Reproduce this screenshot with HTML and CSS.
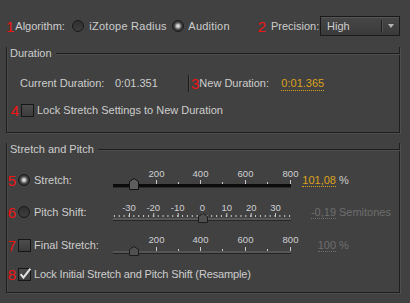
FILE: index.html
```html
<!DOCTYPE html>
<html>
<head>
<meta charset="utf-8">
<link rel="stylesheet" href="styles.css">
</head>
<body>
<div class="panel">
  <div class="top-row">
    <div class="algo">
      <span class="num n1">1</span>
      <span class="lbl algo-lbl">Algorithm:</span>
      <span class="opt opt1"><span class="radio"></span><span class="opt-text t1">iZotope Radius</span></span>
      <span class="opt opt2"><span class="radio on"></span><span class="opt-text t2">Audition</span></span>
    </div>
    <div class="prec">
      <span class="num n2">2</span>
      <span class="lbl prec-lbl">Precision:</span>
      <div class="select"><span class="select-text">High</span><span class="select-btn"><span class="arrow"></span></span></div>
    </div>
  </div>

  <section class="group dur">
    <div class="group-title"><span>Duration</span></div>
    <div class="dur-row">
      <span class="dur-cur">Current Duration:</span>
      <span class="dur-val">0:01.351</span>
      <span class="vsep"></span>
      <span class="num n3">3</span>
      <span class="dur-new">New Duration:</span>
      <span class="link">0:01.365</span>
    </div>
    <div class="chk-row">
      <span class="num n4">4</span>
      <span class="check"></span>
      <span>Lock Stretch Settings to New Duration</span>
    </div>
  </section>

  <section class="group sp">
    <div class="group-title"><span>Stretch and Pitch</span></div>
    <div class="srow r-stretch">
      <span class="num">5</span>
      <span class="radio on"></span>
      <span class="slbl">Stretch:</span>
      <svg class="slider" width="190" height="26" viewBox="0 0 190 26">
        <g class="tl">
          <text x="46.5" y="10">200</text>
          <text x="90.5" y="10">400</text>
          <text x="135.5" y="10">600</text>
          <text x="180.5" y="10">800</text>
        </g>
        <path class="tick" d="M46.5 13v4M90.5 13v4M135.5 13v4M180.5 13v4M68.5 15v2M112.5 15v2M157.5 15v2"/>
        <rect x="3" y="17" width="178" height="4" fill="#0b0b0b"/>
        <rect x="3" y="20" width="178" height="1" fill="#2a2a2a"/>
        <path class="thumb" d="M19.5 14.5 L24 11.5 L28.5 14.5 V22.5 H19.5 Z"/>
      </svg>
      <span class="val"><span class="vnum"><span class="link">101,08</span></span><span class="unit">%</span></span>
    </div>
    <div class="srow r-pitch">
      <span class="num">6</span>
      <span class="radio"></span>
      <span class="slbl">Pitch Shift:</span>
      <svg class="slider" width="190" height="26" viewBox="0 0 190 26">
        <g class="tl">
          <text x="19" y="12">-30</text>
          <text x="43.3" y="12">-20</text>
          <text x="67.7" y="12">-10</text>
          <text x="92.5" y="12">0</text>
          <text x="116.8" y="12">10</text>
          <text x="141.2" y="12">20</text>
          <text x="165.5" y="12">30</text>
        </g>
        <line class="dots" x1="3.9" y1="17" x2="181" y2="17"/>
        <path class="tick" d="M19.5 14v4M43.8 14v4M68.2 14v4M92.5 14v4M116.8 14v4M141.2 14v4M165.5 14v4"/>
        <rect x="3" y="19" width="178" height="2" fill="#585858"/>
        <rect x="3" y="21" width="178" height="1" fill="#262626"/>
        <path class="thumb dis" d="M88.5 17.5 L93 14.5 L97.5 17.5 V23.5 H88.5 Z"/>
      </svg>
      <span class="val dim"><span class="vnum"><span class="dimlink">-0,19</span></span><span class="unit">Semitones</span></span>
    </div>
    <div class="srow r-final">
      <span class="num">7</span>
      <span class="check"></span>
      <span class="slbl">Final Stretch:</span>
      <svg class="slider" width="190" height="26" viewBox="0 0 190 26">
        <g class="tl">
          <text x="46.5" y="11">200</text>
          <text x="90.5" y="11">400</text>
          <text x="135.5" y="11">600</text>
          <text x="180.5" y="11">800</text>
        </g>
        <path class="tick" d="M46.5 15v4M90.5 15v4M135.5 15v4M180.5 15v4M68.5 17v2M112.5 17v2M157.5 17v2"/>
        <rect x="3" y="19" width="178" height="2" fill="#555555"/>
        <rect x="3" y="21" width="178" height="1" fill="#242424"/>
        <path class="thumb dis" d="M19.5 17.5 L24 14.5 L28.5 17.5 V23.5 H19.5 Z"/>
      </svg>
      <span class="val dim"><span class="vnum"><span class="dimlink">100</span></span><span class="unit">%</span></span>
    </div>
    <div class="lrow">
      <span class="num">8</span>
      <span class="check on"><svg width="13" height="13" viewBox="0 0 13 13"><path d="M2.6 6.2 L5.4 9.6 L12.4 0.6" fill="none" stroke="#e2e2e2" stroke-width="2"/></svg></span>
      <span class="slbl2">Lock Initial Stretch and Pitch Shift (Resample)</span>
    </div>
  </section>
</div>
</body>
</html>
```

FILE: styles.css
```css
html, body {
  margin: 0;
  padding: 0;
}
body {
  background: #414141;
  color: #cdcdcd;
  font: 11px/13px "Liberation Sans", Arial, sans-serif;
  width: 410px;
  height: 303px;
  overflow: hidden;
  white-space: nowrap;
}

.num {
  color: #f01414;
  font: 15px/15px "Liberation Sans", Arial, sans-serif;
  flex: none;
}

/* top row */
.top-row {
  display: flex;
  align-items: center;
  justify-content: space-between;
  height: 20px;
  margin-top: 16px;
  padding: 0 10px 0 6px;
}
.algo, .prec {
  display: flex;
  align-items: center;
  flex: none;
}
.n1 { margin-right: 1px; }
.algo-lbl { width: 57px; flex: none; }
.opt {
  display: flex;
  align-items: center;
  flex: none;
}
.opt1 { gap: 5px; margin-right: 3px; }
.opt2 { gap: 4px; }
.t1 {
  width: 80px;
  flex: none;
  letter-spacing: 0.25px;
}
.t2 { letter-spacing: 0.2px; }
.n2 { margin-right: 5px; }
.prec-lbl { width: 49px; flex: none; }

.radio {
  box-sizing: border-box;
  width: 12px;
  height: 12px;
  border-radius: 50%;
  border: 1px solid #181818;
  background: linear-gradient(#303030, #3e3e3e);
  box-shadow: 0 0 0 0.5px #4a4a4a;
  flex: none;
}
.radio.on {
  background: radial-gradient(circle, #e0e0e0 0, #d0d0d0 1.3px, #8c8c8c 2.4px, #4a4a4a 3.6px, #353535 5px);
}

.check {
  box-sizing: border-box;
  width: 13px;
  height: 13px;
  border: 1px solid #161616;
  background: linear-gradient(#4c4c4c, #3c3c3c);
  flex: none;
  position: relative;
}
.check svg {
  position: absolute;
  left: -1px;
  top: -1px;
  overflow: visible;
}

.select {
  display: flex;
  box-sizing: border-box;
  width: 80px;
  height: 20px;
  border: 1px solid #1a1a1a;
  background: linear-gradient(#474747, #3a3a3a);
  box-shadow: inset 0 1px 0 #555;
  flex: none;
}
.select-text {
  flex: 1;
  padding-left: 6px;
  line-height: 18px;
}
.select-btn {
  width: 17px;
  margin: 3px 0;
  border-left: 1px solid #1e1e1e;
  box-shadow: inset 1px 0 0 #515151;
  display: flex;
  align-items: center;
  justify-content: center;
}
.arrow {
  width: 0;
  height: 0;
  border-left: 3.5px solid transparent;
  border-right: 3.5px solid transparent;
  border-top: 4px solid #b4b4b4;
}

/* groups */
.group {
  margin: 0 10px 0 6px;
  border: 1px solid #1e1e1e;
  border-top: 0;
  box-shadow: 1px 1px 0 #4e4e4e, inset 1px 0 0 #4b4b4b;
}
.group-title {
  display: flex;
  align-items: center;
  height: 13px;
  margin-right: -1px;
}
.group-title span {
  padding: 0 4px 0 3px;
}
.group-title::after {
  content: "";
  flex: 1;
  height: 1px;
  background: #1e1e1e;
  box-shadow: 0 1px 0 #4c4c4c;
}

.dur { margin-top: 11px; }
.dur-row {
  display: flex;
  align-items: center;
  height: 17px;
  margin-top: 15px;
  padding-left: 13px;
}
.dur-cur { width: 95px; }
.dur-val { width: 73px; }
.vsep {
  width: 1px;
  height: 17px;
  background: #1a1a1a;
  box-shadow: 1px 0 0 #4c4c4c;
}
.n3 { margin-left: 2px; }
.dur-new { width: 82px; }
.link {
  color: #dca11c;
  border-bottom: 1px dotted #dca11c;
}
.chk-row {
  display: flex;
  align-items: center;
  height: 13px;
  margin-top: 12px;
  padding-bottom: 15px;
}
.chk-row .num {
  width: 12px;
  text-align: right;
  margin-right: 2px;
}
.chk-row .check { margin-right: 3px; }

.sp { margin-top: 10px; padding-bottom: 11px; }
.sp .group-title { margin-bottom: 11px; }
.srow {
  display: flex;
  align-items: center;
  height: 26px;
}
.r-pitch { margin-top: 6px; }
.r-final { margin-top: 7px; }
.srow .num, .lrow .num {
  width: 9px;
  text-align: right;
  margin-right: 2px;
}
.srow .radio { margin-right: 4px; }
.srow .check, .lrow .check { margin-right: 3px; }
.slbl { width: 76px; flex: none; }
.slbl2 { letter-spacing: -0.15px; }
.slider {
  display: block;
  flex: none;
}
.tl text {
  fill: #cfd0d4;
  font: 9.5px "Liberation Sans", Arial, sans-serif;
  text-anchor: middle;
}
.tick {
  stroke: #c8c8c8;
  stroke-width: 1;
  fill: none;
}
.dots {
  stroke: #c8c8c8;
  stroke-width: 2;
  stroke-dasharray: 1 3.8667;
}
.thumb {
  fill: #5d5d5d;
  stroke: #121212;
  stroke-width: 1;
}
.thumb.dis {
  fill: #505050;
  stroke: #1c1c1c;
}
.val {
  display: flex;
  align-items: center;
}
.vnum {
  width: 36px;
  text-align: right;
}
.unit { margin-left: 3px; }
.dim { color: #6e6e6e; }
.dimlink {
  border-bottom: 1px dotted #6e6e6e;
}

.lrow {
  display: flex;
  align-items: center;
  height: 13px;
  margin-top: 10px;
}
```
